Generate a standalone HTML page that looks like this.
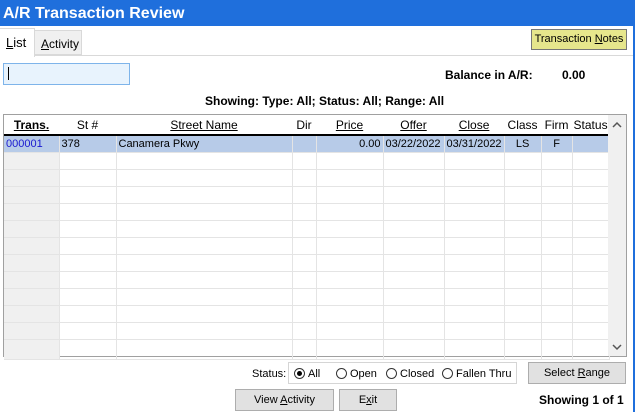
<!DOCTYPE html><html><head><style>
body{margin:0;width:635px;height:412px;background:#fff;font-family:"Liberation Sans",sans-serif;font-size:12px;position:relative;overflow:hidden;color:#000}
.a{position:absolute;white-space:nowrap}
.title{left:0;top:0;width:635px;height:26px;background:#1f6fdc;color:#fff;font-weight:bold;font-size:16px;line-height:27px;padding-left:3px;box-sizing:border-box}
.btn{position:absolute;background:#e1e1e1;border:1px solid #adadad;text-align:center;box-sizing:border-box;white-space:nowrap}
u{text-decoration:underline}
table{border-collapse:collapse;position:absolute;left:4px;top:116px;table-layout:fixed}
td{border-right:1px solid #e4e4e4;border-bottom:1px solid #e4e4e4;height:16px;padding:0 2px;font-size:11px;white-space:nowrap;overflow:hidden}
th{font-weight:normal;height:18px;border-bottom:2px solid #000;font-size:12px;padding:0}
td.c0{background:#f0f0f0}
tr.sel td{background:#b7cbe8}
.r{display:inline-block;width:11px;height:11px;border:1px solid #333;border-radius:50%;vertical-align:-2px;box-sizing:border-box;margin-right:3px;position:relative}
</style></head><body>
<div class="a title">A/R Transaction Review</div>
<div class="a" style="left:633px;top:26px;width:2px;height:386px;background:#1f6fdc"></div>
<div class="a" style="left:0;top:55px;width:633px;height:1px;background:#d9d9d9"></div>
<div class="a" style="left:0;top:28px;width:34px;height:28px;background:#fff;border-right:1px solid #d9d9d9;border-top:1px solid #d9d9d9"></div>
<div class="a" style="left:6px;top:35px;font-size:13px"><u>L</u>ist</div>
<div class="a" style="left:34px;top:30px;width:48px;height:25px;background:#f0f0f0;border:1px solid #d9d9d9;box-sizing:border-box"></div>
<div class="a" style="left:41px;top:37px;font-size:12px"><u>A</u>ctivity</div>
<div class="btn" style="left:531px;top:29px;width:96px;height:21px;background:#e6e68c;border-color:#777;line-height:19px;font-size:11px">Transaction <u>N</u>otes</div>
<div class="a" style="left:3px;top:63px;width:127px;height:22px;background:#e8f3fd;border:1px solid #7eb4ea;box-sizing:border-box"></div>
<div class="a" style="left:8px;top:67px;width:1px;height:13px;background:#000"></div>
<div class="a" style="left:445px;top:68px;font-weight:bold">Balance in A/R:</div>
<div class="a" style="left:562px;top:68px;font-weight:bold">0.00</div>
<div class="a" style="left:205px;top:94px;font-weight:bold">Showing: Type: All; Status: All; Range: All</div>
<div class="a" style="left:3px;top:114px;width:624px;height:243px;border:1px solid #a0a0a0;box-sizing:border-box"></div>
<table>
<colgroup><col style="width:55px"><col style="width:57px"><col style="width:176px"><col style="width:24px"><col style="width:67px"><col style="width:61px"><col style="width:59px"><col style="width:37px"><col style="width:31px"><col style="width:37px"></colgroup>
<tr><th style="font-weight:bold"><u>Trans.</u></th><th>St #</th><th><u>Street Name</u></th><th>Dir</th><th><u>Price</u></th><th><u>Offer</u></th><th><u>Close</u></th><th>Class</th><th>Firm</th><th>Status</th></tr>
<tr class="sel"><td style="color:#1a1ad0">000001</td><td>378</td><td>Canamera Pkwy</td><td></td><td style="text-align:right">0.00</td><td>03/22/2022</td><td>03/31/2022</td><td style="text-align:center">LS</td><td style="text-align:center">F</td><td></td></tr>
<tr><td class="c0"></td><td></td><td></td><td></td><td></td><td></td><td></td><td></td><td></td><td></td></tr>
<tr><td class="c0"></td><td></td><td></td><td></td><td></td><td></td><td></td><td></td><td></td><td></td></tr>
<tr><td class="c0"></td><td></td><td></td><td></td><td></td><td></td><td></td><td></td><td></td><td></td></tr>
<tr><td class="c0"></td><td></td><td></td><td></td><td></td><td></td><td></td><td></td><td></td><td></td></tr>
<tr><td class="c0"></td><td></td><td></td><td></td><td></td><td></td><td></td><td></td><td></td><td></td></tr>
<tr><td class="c0"></td><td></td><td></td><td></td><td></td><td></td><td></td><td></td><td></td><td></td></tr>
<tr><td class="c0"></td><td></td><td></td><td></td><td></td><td></td><td></td><td></td><td></td><td></td></tr>
<tr><td class="c0"></td><td></td><td></td><td></td><td></td><td></td><td></td><td></td><td></td><td></td></tr>
<tr><td class="c0"></td><td></td><td></td><td></td><td></td><td></td><td></td><td></td><td></td><td></td></tr>
<tr><td class="c0"></td><td></td><td></td><td></td><td></td><td></td><td></td><td></td><td></td><td></td></tr>
<tr><td class="c0"></td><td></td><td></td><td></td><td></td><td></td><td></td><td></td><td></td><td></td></tr>
<tr><td class="c0" style="height:19px"></td><td></td><td></td><td></td><td></td><td></td><td></td><td></td><td></td><td></td></tr>
</table>
<div class="a" style="left:608px;top:115px;width:18px;height:241px;background:#f0f0f0"></div>
<svg class="a" style="left:612px;top:121px" width="10" height="8"><path d="M1 6 L5 2 L9 6" fill="none" stroke="#555" stroke-width="1.5"/></svg>
<svg class="a" style="left:612px;top:343px" width="10" height="8"><path d="M1 2 L5 6 L9 2" fill="none" stroke="#555" stroke-width="1.5"/></svg>
<div class="a" style="left:252px;top:368px;font-size:11px">Status:</div>
<div class="a" style="left:288px;top:362px;width:229px;height:22px;border:1px solid #d5d5d5;box-sizing:border-box"></div>
<div class="a" style="left:294px;top:368px;font-size:11px"><span class="r"><span style="position:absolute;left:2px;top:2px;width:5px;height:5px;border-radius:50%;background:#000"></span></span>All</div>
<div class="a" style="left:336px;top:368px;font-size:11px"><span class="r"></span>Open</div>
<div class="a" style="left:386px;top:368px;font-size:11px"><span class="r"></span>Closed</div>
<div class="a" style="left:442px;top:368px;font-size:11px"><span class="r"></span>Fallen Thru</div>
<div class="btn" style="left:528px;top:362px;width:98px;height:22px;line-height:20px;font-size:11px">Select <u>R</u>ange</div>
<div class="btn" style="left:235px;top:389px;width:99px;height:22px;line-height:20px;font-size:11px">View <u>A</u>ctivity</div>
<div class="btn" style="left:339px;top:389px;width:58px;height:22px;line-height:20px;font-size:11px">E<u>x</u>it</div>
<div class="a" style="left:539px;top:393px;font-weight:bold">Showing 1 of 1</div>
</body></html>
